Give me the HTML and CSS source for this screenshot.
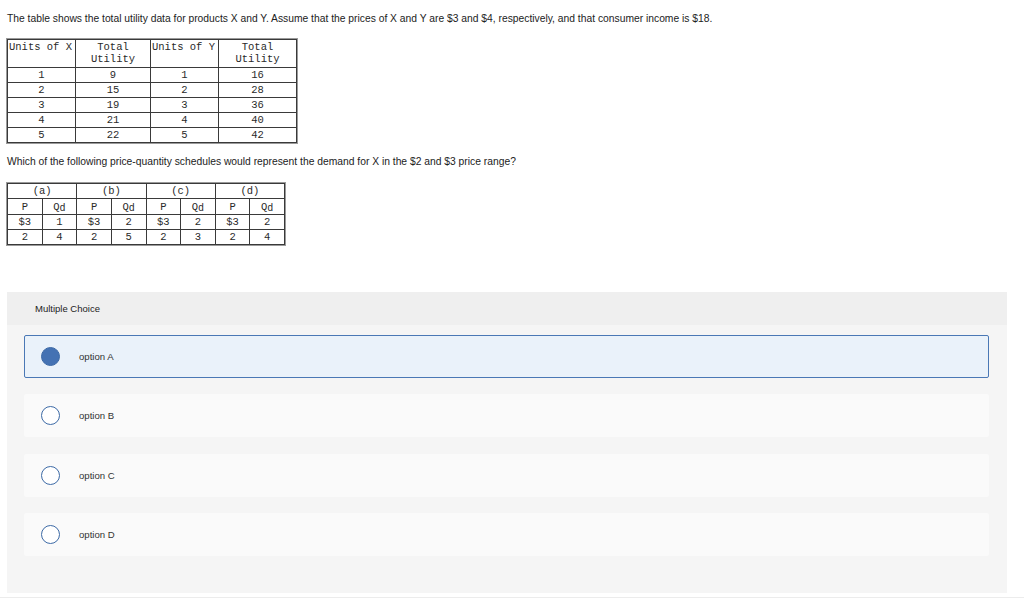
FILE: index.html
```html
<!DOCTYPE html>
<html>
<head>
<meta charset="utf-8">
<link rel="stylesheet" href="styles.css">
</head>
<body>
<div class="page">
  <p class="q1">The table shows the total utility data for products X and Y. Assume that the prices of X and Y are $3 and $4, respectively, and that consumer income is $18.</p>
  <table class="t1">
    <colgroup><col class="c1"><col class="c2"><col class="c3"><col class="c4"></colgroup>
    <tr class="head"><td class="left">Units of X</td><td>Total<br>Utility</td><td class="left">Units of Y</td><td>Total<br>Utility</td></tr>
    <tr><td>1</td><td>9</td><td>1</td><td>16</td></tr>
    <tr><td>2</td><td>15</td><td>2</td><td>28</td></tr>
    <tr><td>3</td><td>19</td><td>3</td><td>36</td></tr>
    <tr><td>4</td><td>21</td><td>4</td><td>40</td></tr>
    <tr><td>5</td><td>22</td><td>5</td><td>42</td></tr>
  </table>
  <p class="q2">Which of the following price-quantity schedules would represent the demand for X in the $2 and $3 price range?</p>
  <table class="t2">
    <tr><td colspan="2">(a)</td><td colspan="2">(b)</td><td colspan="2">(c)</td><td colspan="2">(d)</td></tr>
    <tr class="pq"><td>P</td><td>Q<sub>d</sub></td><td>P</td><td>Q<sub>d</sub></td><td>P</td><td>Q<sub>d</sub></td><td>P</td><td>Q<sub>d</sub></td></tr>
    <tr><td>$3</td><td>1</td><td>$3</td><td>2</td><td>$3</td><td>2</td><td>$3</td><td>2</td></tr>
    <tr><td>2</td><td>4</td><td>2</td><td>5</td><td>2</td><td>3</td><td>2</td><td>4</td></tr>
  </table>
  <div class="panel">
    <div class="panel-head">Multiple Choice</div>
    <div class="options">
      <div class="option selected"><span class="radio"></span><span class="label">option A</span></div>
      <div class="option"><span class="radio"></span><span class="label">option B</span></div>
      <div class="option"><span class="radio"></span><span class="label">option C</span></div>
      <div class="option"><span class="radio"></span><span class="label">option D</span></div>
    </div>
  </div>
  <div class="footer-line"></div>
</div>
</body>
</html>
```

FILE: styles.css
```css
html, body {
  margin: 0;
  padding: 0;
  background: #ffffff;
}
.page {
  padding: 13px 0 0 7px;
  font-family: "Liberation Sans", Arial, sans-serif;
  color: #222;
}
.q1, .q2 {
  margin: 0;
  font-size: 10.3px;
  line-height: 12px;
  color: #222;
}
.t1 {
  margin-top: 14px;
  width: 289px;
  border-collapse: collapse;
  table-layout: fixed;
  font-family: "Liberation Mono", "Courier New", monospace;
  font-size: 10.5px;
  color: #2a2a2a;
  box-shadow: 0 0 0 1px #9a9a9a;
}
.t1 .c1 { width: 68px; }
.t1 .c2 { width: 75px; }
.t1 .c3 { width: 68px; }
.t1 .c4 { width: 78px; }
.t1 td {
  border: 1px solid #3a3a3a;
  text-align: center;
  padding: 0;
  height: 14px;
  line-height: 12px;
}
.t1 .head td {
  height: 26px;
  vertical-align: top;
  padding-top: 1px;
}
.t1 td.left {
  text-align: left;
  padding-left: 1px;
}
.q2 {
  margin-top: 13px;
}
.t2 {
  margin-top: 15px;
  width: 278px;
  border-collapse: collapse;
  table-layout: fixed;
  font-family: "Liberation Mono", "Courier New", monospace;
  font-size: 10.5px;
  color: #2a2a2a;
  box-shadow: 0 0 0 1px #9a9a9a;
}
.t2 td {
  border: 1px solid #3a3a3a;
  text-align: center;
  padding: 0;
  height: 14px;
  line-height: 12px;
}
.t2 .pq td {
  height: 15px;
}
.t2 sub {
  font-size: 10px;
  vertical-align: -1px;
  line-height: 0;
}
.panel {
  margin-top: 47px;
  width: 1000px;
  background: #f5f5f5;
  padding-bottom: 37px;
}
.panel-head {
  height: 33px;
  background: #efefef;
  display: flex;
  align-items: center;
  padding-left: 28px;
  font-size: 9.5px;
  color: #222;
}
.options {
  padding: 10px 18px 0 17px;
  display: flex;
  flex-direction: column;
  gap: 16.4px;
}
.option {
  height: 43px;
  box-sizing: border-box;
  background: #fafafa;
  border-radius: 2px;
  display: flex;
  align-items: center;
  padding-left: 17px;
  font-size: 9.6px;
  color: #333;
}
.option.selected {
  background: #eaf2fa;
  border: 1px solid #4a78b5;
  padding-left: 16px;
}
.radio {
  width: 19px;
  height: 19px;
  box-sizing: border-box;
  border-radius: 50%;
  border: 1.5px solid #3d6aa6;
  background: #ffffff;
  flex: none;
}
.option.selected .radio {
  background: #4472b3;
  border-color: #3d6aa6;
}
.label {
  margin-left: 19px;
}
.footer-line {
  margin-top: 4px;
  margin-left: -7px;
  height: 1px;
  background: #ececec;
}
```
